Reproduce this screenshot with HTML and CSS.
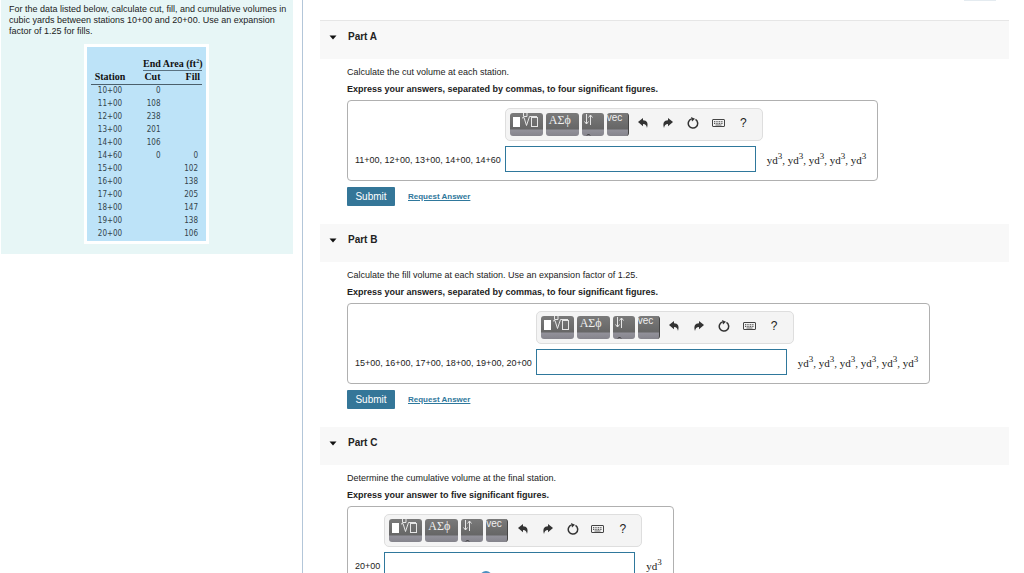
FILE: index.html
```html
<!DOCTYPE html>
<html lang="en">
<head>
    <meta charset="UTF-8">
    <meta name="viewport" content="width=device-width, initial-scale=1.0">
    <title>Earthwork volumes</title>
    <link rel="stylesheet" href="styles.css">
</head>
<body>
    <!-- Shared icons -->
    <svg class="sprite" aria-hidden="true">
        <symbol id="i-caret" viewBox="0 0 8 5"><path d="M0.500 0.500H7.500L4 4.500Z"/></symbol>
        <symbol id="i-template" viewBox="0 0 33 23">
            <rect x="3" y="4" width="7" height="10" fill="#fff"/>
            <path d="M13.500 0V3.500H17V0M12 5L14 4.500L16.500 12.500L19.500 3.500H27" fill="none" stroke="#e6e6e6"/>
            <rect x="21.500" y="4.500" width="6" height="9" fill="none" stroke="#e6e6e6"/>
        </symbol>
        <symbol id="i-arrows" viewBox="0 0 22 23">
            <path d="M4.500 1V11M2.500 8.500L4.500 11L6.500 8.500M8.500 12V2M6.500 4.500L8.500 2L10.500 4.500" fill="none" stroke="#e6e6e6"/>
            <path d="M5 22.500L6.500 21L8 22.500" fill="none" stroke="#333"/>
        </symbol>
        <symbol id="i-undo" viewBox="0 0 12 12"><path d="M1 5L6 1V3.200C10 3.200 11.500 6 10 11C9.500 8.300 8.500 7 6 7V9.300Z"/></symbol>
        <symbol id="i-redo" viewBox="0 0 12 12"><path d="M11 5L6 1V3.200C2 3.200 0.500 6 2 11C2.500 8.300 3.500 7 6 7V9.300Z"/></symbol>
        <symbol id="i-reset" viewBox="0 0 12 12">
            <path d="M8.500 2.400A4.700 4.700 0 1 1 4.500 1.900" fill="none" stroke="#333" stroke-width="1.500"/>
            <path d="M4 0L8 1.800L5 4.600Z"/>
        </symbol>
        <symbol id="i-keyboard" viewBox="0 0 13 9">
            <rect x="0.500" y="0.500" width="12" height="7" rx="0.500" fill="none" stroke="#444"/>
            <path d="M2 2.700H11M2 4.400H11" stroke="#444" stroke-dasharray="1 0.700" fill="none"/>
            <path d="M3.500 6H9.500" stroke="#444" stroke-width="0.800"/>
        </symbol>
    </svg>

    <div class="page">
        <aside class="problem">
            <div class="problem-box">
                <p>For the data listed below, calculate cut, fill, and cumulative volumes in cubic yards between stations 10+00 and 20+00. Use an expansion factor of 1.25 for fills.</p>
                <div class="frame">
                    <table>
                        <thead>
                            <tr><th></th><th colspan="2" class="area"><span>End Area (ft<sup>2</sup>)</span></th></tr>
                            <tr class="heads"><th>Station</th><th>Cut</th><th>Fill</th></tr>
                        </thead>
                        <tbody>
                            <tr><td>10+00</td><td>0</td><td></td></tr>
                            <tr><td>11+00</td><td>108</td><td></td></tr>
                            <tr><td>12+00</td><td>238</td><td></td></tr>
                            <tr><td>13+00</td><td>201</td><td></td></tr>
                            <tr><td>14+00</td><td>106</td><td></td></tr>
                            <tr><td>14+60</td><td>0</td><td>0</td></tr>
                            <tr><td>15+00</td><td></td><td>102</td></tr>
                            <tr><td>16+00</td><td></td><td>138</td></tr>
                            <tr><td>17+00</td><td></td><td>205</td></tr>
                            <tr><td>18+00</td><td></td><td>147</td></tr>
                            <tr><td>19+00</td><td></td><td>138</td></tr>
                            <tr><td>20+00</td><td></td><td>106</td></tr>
                        </tbody>
                    </table>
                </div>
            </div>
        </aside>

        <main>
            <div class="topbar"><span class="tab"></span></div>

            <section class="part first">
                <header>
                    <button class="toggle" aria-label="Collapse Part A"><svg><use href="#i-caret"/></svg></button>
                    <h2>Part A</h2>
                </header>
                <div class="part-body">
                    <p>Calculate the cut volume at each station.</p>
                    <p class="hint">Express your answers, separated by commas, to four significant figures.</p>
                    <div class="answer">
                        <div class="toolbar">
                            <button class="key wide" aria-label="Templates"><svg><use href="#i-template"/></svg></button>
                            <button class="key wide greek">ΑΣϕ</button>
                            <button class="key" aria-label="Arrows"><svg><use href="#i-arrows"/></svg></button>
                            <button class="key vec">vec</button>
                            <div class="tools">
                                <button aria-label="Undo"><svg><use href="#i-undo"/></svg></button>
                                <button aria-label="Redo"><svg><use href="#i-redo"/></svg></button>
                                <button aria-label="Reset"><svg><use href="#i-reset"/></svg></button>
                                <button aria-label="Keyboard"><svg class="kbd"><use href="#i-keyboard"/></svg></button>
                                <button>?</button>
                            </div>
                        </div>
                        <label for="answer-a">11+00, 12+00, 13+00, 14+00, 14+60</label>
                        <input type="text" id="answer-a">
                        <span class="units">yd<sup>3</sup>, yd<sup>3</sup>, yd<sup>3</sup>, yd<sup>3</sup>, yd<sup>3</sup></span>
                    </div>
                    <div class="actions">
                        <button class="submit">Submit</button>
                        <a href="#">Request Answer</a>
                    </div>
                </div>
            </section>

            <section class="part">
                <header>
                    <button class="toggle" aria-label="Collapse Part B"><svg><use href="#i-caret"/></svg></button>
                    <h2>Part B</h2>
                </header>
                <div class="part-body">
                    <p>Calculate the fill volume at each station. Use an expansion factor of 1.25.</p>
                    <p class="hint">Express your answers, separated by commas, to four significant figures.</p>
                    <div class="answer">
                        <div class="toolbar">
                            <button class="key wide" aria-label="Templates"><svg><use href="#i-template"/></svg></button>
                            <button class="key wide greek">ΑΣϕ</button>
                            <button class="key" aria-label="Arrows"><svg><use href="#i-arrows"/></svg></button>
                            <button class="key vec">vec</button>
                            <div class="tools">
                                <button aria-label="Undo"><svg><use href="#i-undo"/></svg></button>
                                <button aria-label="Redo"><svg><use href="#i-redo"/></svg></button>
                                <button aria-label="Reset"><svg><use href="#i-reset"/></svg></button>
                                <button aria-label="Keyboard"><svg class="kbd"><use href="#i-keyboard"/></svg></button>
                                <button>?</button>
                            </div>
                        </div>
                        <label for="answer-b">15+00, 16+00, 17+00, 18+00, 19+00, 20+00</label>
                        <input type="text" id="answer-b">
                        <span class="units">yd<sup>3</sup>, yd<sup>3</sup>, yd<sup>3</sup>, yd<sup>3</sup>, yd<sup>3</sup>, yd<sup>3</sup></span>
                    </div>
                    <div class="actions">
                        <button class="submit">Submit</button>
                        <a href="#">Request Answer</a>
                    </div>
                </div>
            </section>

            <section class="part">
                <header>
                    <button class="toggle" aria-label="Collapse Part C"><svg><use href="#i-caret"/></svg></button>
                    <h2>Part C</h2>
                </header>
                <div class="part-body">
                    <p>Determine the cumulative volume at the final station.</p>
                    <p class="hint">Express your answer to five significant figures.</p>
                    <div class="answer">
                        <div class="toolbar">
                            <button class="key wide" aria-label="Templates"><svg><use href="#i-template"/></svg></button>
                            <button class="key wide greek">ΑΣϕ</button>
                            <button class="key" aria-label="Arrows"><svg><use href="#i-arrows"/></svg></button>
                            <button class="key vec">vec</button>
                            <div class="tools">
                                <button aria-label="Undo"><svg><use href="#i-undo"/></svg></button>
                                <button aria-label="Redo"><svg><use href="#i-redo"/></svg></button>
                                <button aria-label="Reset"><svg><use href="#i-reset"/></svg></button>
                                <button aria-label="Keyboard"><svg class="kbd"><use href="#i-keyboard"/></svg></button>
                                <button>?</button>
                            </div>
                        </div>
                        <label for="answer-c">20+00</label>
                        <input type="text" id="answer-c">
                        <span class="units">yd<sup>3</sup></span>
                        <span class="handle"></span>
                    </div>
                </div>
            </section>
        </main>
    </div>
</body>
</html>
```
FILE: styles.css
```css
* {
    box-sizing: border-box;
}

body {
    margin: 0;
    height: 100vh;
    overflow: hidden;
    background: #fff;
    color: #222;
    font-family: "Liberation Sans", Arial, sans-serif;
    font-size: 9px;
    line-height: 12px;
}

p, h2 {
    margin: 0;
}

button {
    padding: 0;
    border: none;
    background: none;
    color: inherit;
    font-family: inherit;
    cursor: pointer;
}

svg {
    display: block;
    fill: #333;
}

.sprite {
    display: none;
}

.page {
    display: flex;
    height: 100%;
    overflow: hidden;
}

/* Problem statement */
.problem {
    flex: 0 0 303px;
    padding: 0 9px 0 1px;
    border-right: 1px solid #b3c6d9;
}

.problem-box {
    padding: 4px 4px 10px 8px;
    background: #e7f6f6;
    line-height: 11px;
}

.frame {
    width: 125px;
    margin: 7px 0 0 75px;
    padding: 11px 4px 1px;
    border: 3px solid #fff;
    background: #bde3f8;
}

table {
    width: 100%;
    border-collapse: collapse;
    table-layout: fixed;
}

th, td {
    height: 13px;
    padding: 0;
    line-height: 12px;
}

th {
    font-family: "Liberation Serif", "Times New Roman", serif;
    font-size: 10px;
    color: #111;
    white-space: nowrap;
}

th sup {
    font-size: 6px;
    line-height: 0;
}

.area {
    text-align: right;
}

.area span {
    display: block;
    margin-left: 14px;
    border-bottom: 1px solid #5b7382;
}

.heads th {
    border-bottom: 1px solid #4b5f6b;
    text-align: right;
}

.heads th:nth-child(2) {
    padding-right: 5px;
}

.heads th:nth-child(3) {
    padding-right: 2px;
}

.heads th:first-child {
    text-align: center;
}

th:first-child {
    width: 38px;
}

td {
    font-family: "DejaVu Sans Condensed", "DejaVu Sans", sans-serif;
    font-size: 8px;
    color: #34434c;
    text-align: right;
}

td:first-child {
    text-align: center;
}

td:nth-child(2) {
    padding-right: 5px;
}

td:nth-child(3) {
    padding-right: 4px;
}

/* Parts */
main {
    flex: 1;
    padding: 0 15px 0 17px;
}

.topbar {
    display: flex;
    justify-content: flex-end;
    height: 20px;
    padding-right: 13px;
}

.tab {
    width: 32px;
    height: 1px;
    background: #e4ebf0;
}

.part header {
    display: flex;
    align-items: center;
    gap: 11px;
    padding: 10px 9px 16px;
    background: #f8f8f8;
}

.first header {
    border-top: 1px solid #e6e6e6;
}

.toggle svg {
    width: 8px;
    height: 5px;
    fill: #111;
}

h2 {
    font-size: 10px;
    line-height: 12px;
}

.part-body {
    display: flex;
    flex-direction: column;
    align-items: flex-start;
    gap: 5px;
    padding: 7px 27px 18px;
}

.hint {
    font-weight: bold;
}

.answer {
    position: relative;
    display: grid;
    grid-template-columns: auto 251px auto;
    align-items: center;
    row-gap: 5px;
    padding: 7px 11px 8px 7px;
    border: 1px solid #b0b0b0;
    border-radius: 4px;
}

.answer label {
    padding: 2px 4px 0 0;
}

.answer input {
    width: 100%;
    height: 26px;
    padding: 0 4px;
    border: 1px solid #2f789c;
    font-size: 10px;
}

.units {
    padding: 2px 0 0 11px;
    font-family: "Liberation Serif", "Times New Roman", serif;
    font-size: 11px;
    white-space: nowrap;
}

.units sup {
    font-size: 9px;
    line-height: 0;
}

/* Equation toolbar */
.toolbar {
    grid-column: 2 / 4;
    display: flex;
    align-items: center;
    gap: 3px;
    width: 258px;
    height: 33px;
    padding: 0 4px;
    border: 1px solid #dedede;
    border-radius: 5px;
    background: #f4f4f4;
}

.key {
    display: flex;
    align-items: flex-start;
    width: 22px;
    height: 23px;
    border-radius: 3px;
    overflow: hidden;
    background: linear-gradient(#7a7a7a, #666 16px, #92919a 17px, #85848c);
    color: #f0f0f0;
    font-size: 10px;
    line-height: 10px;
}

.key svg {
    width: 100%;
    height: 23px;
}

.wide {
    width: 33px;
}

.greek {
    padding-left: 3px;
    font-family: "Liberation Serif", "Times New Roman", serif;
    font-size: 12px;
    line-height: 14px;
}

.vec {
    border-right: 1px solid #444;
}

.tools {
    display: flex;
    margin-left: -1px;
    padding-bottom: 3px;
}

.tools button {
    display: flex;
    justify-content: center;
    align-items: center;
    width: 25px;
    height: 23px;
    font-size: 12px;
}

.tools svg {
    width: 12px;
    height: 12px;
}

.tools .kbd {
    width: 13px;
    height: 9px;
}

.actions {
    display: flex;
    align-items: center;
    gap: 13px;
    padding-top: 1px;
}

.submit {
    width: 48px;
    height: 19px;
    border-radius: 1px;
    background: #347698;
    color: #fff;
    font-size: 10px;
}

.actions a {
    color: #2f789c;
    font-size: 8px;
    font-weight: bold;
}

/* Drag handle over the last field */
.handle {
    position: absolute;
    top: 64px;
    left: 132px;
    width: 12px;
    height: 12px;
    border-radius: 50%;
    background: #4a8fc0;
}
```
